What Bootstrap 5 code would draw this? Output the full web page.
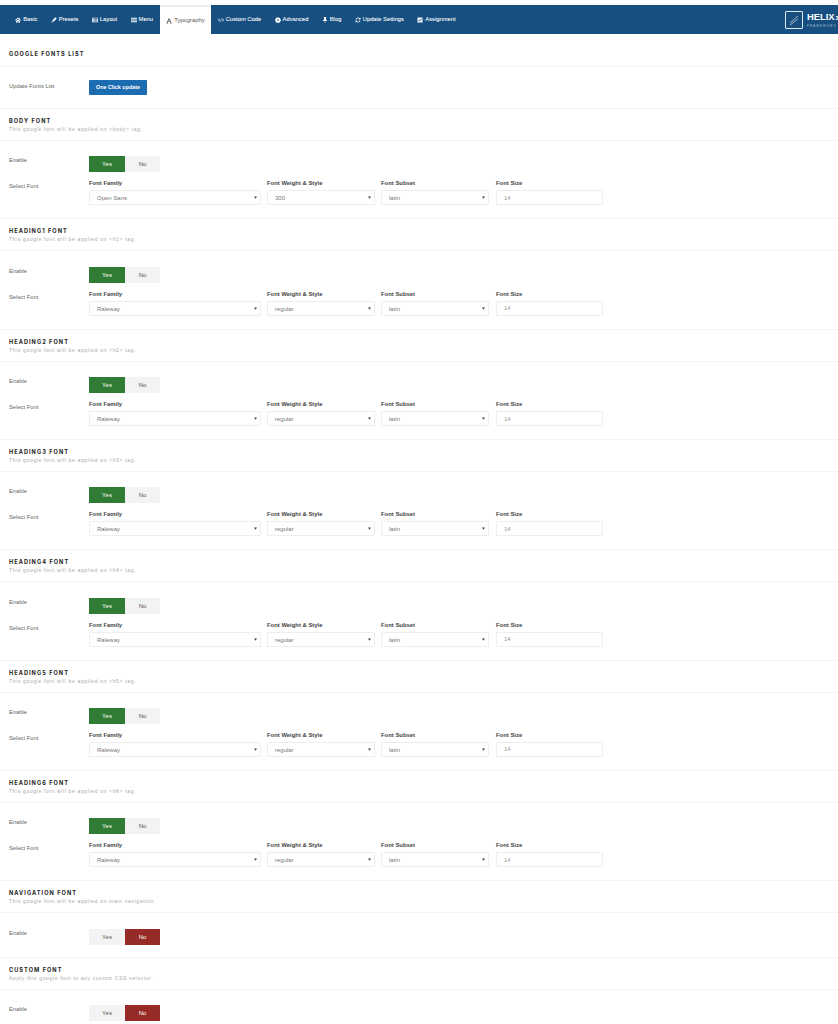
<!DOCTYPE html>
<html lang="en">
<head>
  <meta charset="UTF-8" />
  <meta name="viewport" content="width=device-width, initial-scale=1.0"/>
  <title>Typography - Helix Framework</title>
  <link href="https://cdn.jsdelivr.net/npm/bootstrap@5.3.0/dist/css/bootstrap.min.css" rel="stylesheet" />
  <style>
    body {
      background-color: #fff;
      font-family: "Liberation Sans", Arial, sans-serif;
      font-size: 6px;
      color: #555;
      overflow-x: hidden;
    }
    .top-bar {
      margin-top: 5px;
      height: 29px;
      background-color: #164f80;
      overflow: hidden;
    }
    .top-bar .nav { padding-left: 8.5px; }
    .top-bar .nav-link {
      height: 29px;
      padding: 0 6.7px;
      color: #fff;
      font-size: 5.8px;
      line-height: 29px;
      display: flex;
      align-items: center;
      gap: 2px;
      white-space: nowrap;
      -webkit-text-stroke: .06px #fff;
    }
    .top-bar .nav-link svg { width: 6px; height: 6px; fill: #fff; flex: none; }
    .top-bar .nav-link.active {
      background-color: #fff;
      color: #555;
      border-top: 2px solid #eee;
      padding: 0 6.5px;
      -webkit-text-stroke: 0;
    }
    .top-bar .nav-link.active svg { fill: #555; }
    .helix-logo { width: 53px; height: 29px; overflow: hidden; flex: none; color: #fff; gap: 4px; }
    .logo-box { width: 18px; height: 18px; border: 1px solid #dfe8f0; border-radius: 1px; flex: none; }
    .logo-name { font-size: 9.4px; font-weight: 700; line-height: 9px; white-space: nowrap; }
    .logo-name span { font-size: 5px; margin-left: 1px; }
    .logo-sub { color: #a9c0d4; font-size: 3px; letter-spacing: 1.1px; line-height: 4px; margin-top: 1px; white-space: nowrap; }
    .sec-head {
      height: 32px;
      padding: 9px 0 0 9px;
      border-bottom: 1px solid #f3f3f3;
    }
    .sec-head.first { height: 33px; padding-top: 17px; }
    .sec-title {
      color: #222;
      font-family: Inter, sans-serif;
      font-size: 5.6px;
      font-weight: 700;
      letter-spacing: 1.05px;
      line-height: 7px;
      text-transform: uppercase;
      margin: 0;
    }
    .sec-sub { color: #aaa; font-size: 5px; letter-spacing: .65px; line-height: 8px; margin: 0; }
    .sec-body {
      padding: 15.4px 0 12.93px;
      border-bottom: 1px solid #f3f3f3;
    }
    .sec-body.short { padding-bottom: 12px; }
    .sec-body.update { padding: 13px 0; }
    .sec-body.last { border-bottom: 0; padding-bottom: 2px; }
    .opt-label { width: 89px; flex: none; padding: 1px 0 0 9px; color: #666; font-size: 5.8px; line-height: 7px; }
    .opt-label.label-drop { padding-top: 3px; }
    .switch-group { width: 71px; height: 16px; }
    .switch-group .btn {
      width: 35px;
      flex: none;
      padding: 0;
      border: 0;
      border-radius: 0;
      background-color: #f3f3f3;
      color: #555;
      font-size: 6px;
      line-height: 16px;
    }
    .switch-group .btn:first-child { width: 36px; }
    .switch-group .btn.yes-on { background-color: #317c34; color: #fff; }
    .switch-group .btn.no-on { background-color: #962a26; color: #fff; }
    .update-btn {
      width: 58px;
      height: 15px;
      padding: 0;
      border: 0;
      border-radius: 1px;
      background-color: #1b6cb0;
      color: #fff;
      font-size: 5.4px;
      font-weight: 700;
      line-height: 15px;
    }
    .font-row { margin-top: 8px; }
    .font-col { flex: none; margin-right: 6px; }
    .font-col.fam { width: 172px; }
    .font-col.wgt, .font-col.sub { width: 108px; }
    .font-col.sub { margin-right: 7px; }
    .font-col.siz { width: 107px; }
    .field-name { color: #444; font-size: 5.9px; font-weight: 700; line-height: 7px; margin-bottom: 3px; }
    .font-col .form-select, .font-col .form-control {
      height: 15px;
      padding: 0 7px;
      border: 1px solid #eee;
      border-radius: 1px;
      color: #777;
      font-size: 6px;
      line-height: 13px;
      min-height: 0;
    }
    .font-col .form-select {
      padding-top: 1px;
      background-image: url("data:image/svg+xml,%3Csvg xmlns='http://www.w3.org/2000/svg' viewBox='0 0 4 3'%3E%3Cpath fill='%23444' d='M0 0h4L2 3z'/%3E%3C/svg%3E");
      background-position: right 3px center;
      background-size: 3px 3px;
    }
    .font-col .form-control { color: #999; }
  </style>
</head>
<body>
  <nav class="top-bar d-flex justify-content-between">
    <ul class="nav flex-nowrap">
      <li class="nav-item"><a class="nav-link" href="#"><svg viewBox="0 0 12 12"><path d="M6 1 0 6.500l1 1L6 3l5 4.500 1-1L9.500 4.200V1.500h-1.500v1.300zM2.200 8v3.500h2.800V8.500h2v3h2.800V8L6 4.500z"/></svg>Basic</a></li>
      <li class="nav-item"><a class="nav-link" href="#"><svg viewBox="0 0 12 12"><path d="M9 .5 11.500 3 5 9.500 2.500 7zM2 8l2 2-3.500 1.500z"/></svg>Presets</a></li>
      <li class="nav-item"><a class="nav-link" href="#"><svg viewBox="0 0 12 12"><path d="M0 1.500h12v9H0zm1 1v1.500h2V2.500zm3 0v1.500h7V2.500zM1 5v1.500h2V5zm3 0v1.500h7V5zM1 7.500V9h2V7.500zm3 0V9h7V7.500z"/></svg>Layout</a></li>
      <li class="nav-item"><a class="nav-link" href="#"><svg viewBox="0 0 12 12"><path d="M0 1.500h12v2H0zm0 3.500h12v2H0zm0 3.500h12v2H0z"/></svg>Menu</a></li>
      <li class="nav-item"><a class="nav-link active" href="#"><svg viewBox="0 0 12 12"><path d="M5 1h2l4 9.500h1V11H8v-.5h1L8 8H4l-1 2.500h1V11H0v-.5h1zM6 3 4.400 7h3.200z"/></svg>Typography</a></li>
      <li class="nav-item"><a class="nav-link" href="#"><svg viewBox="0 0 12 8"><path d="M3 1 0 4l3 3 .8-.8L1.600 4l2.200-2.200zM9 1l3 3-3 3-.8-.8L10.400 4 8.200 1.800zM6.800 .5h1L5.200 7.500h-1z"/></svg>Custom Code</a></li>
      <li class="nav-item"><a class="nav-link" href="#"><svg viewBox="0 0 12 12"><path fill-rule="evenodd" d="M5 .5h2l.3 1.400 1 .4 1.200-.8 1.400 1.400-.8 1.200.4 1 1.500.4v2l-1.500.3-.4 1 .8 1.300-1.400 1.400-1.200-.8-1 .4-.3 1.400H5l-.3-1.400-1-.4-1.200.8-1.400-1.400.8-1.300-.4-1L0 7V5l1.500-.4.4-1-.8-1.200 1.400-1.400 1.200.8 1-.4zM6 4.300a1.700 1.700 0 1 0 0 3.400 1.700 1.700 0 0 0 0-3.400z"/></svg>Advanced</a></li>
      <li class="nav-item"><a class="nav-link" href="#"><svg viewBox="0 0 12 12"><path d="M3.500 0h5v1H8v4l2 2v1H6.500v4h-1V8H2V7l2-2V1h-.5z"/></svg>Blog</a></li>
      <li class="nav-item"><a class="nav-link" href="#"><svg viewBox="0 0 12 12"><path d="M6 1a5 5 0 0 1 3.500 1.500L11 1v4H7l1.500-1.500A3 3 0 0 0 3.200 5H1.200A5 5 0 0 1 6 1zM1 7h4L3.500 8.500A3 3 0 0 0 8.800 7h2A5 5 0 0 1 2.500 9.500L1 11z"/></svg>Update Settings</a></li>
      <li class="nav-item"><a class="nav-link" href="#"><svg viewBox="0 0 12 12"><path fill-rule="evenodd" d="M1 1h10v10H1zm1.500 5.500L5 9l5-5-1-1-4 4-1.500-1.500z"/></svg>Assignment</a></li>
    </ul>
    <div class="helix-logo d-flex align-items-center">
      <div class="logo-box d-flex align-items-center justify-content-center">
        <svg width="12" height="12" viewBox="0 0 12 12"><path d="M2 9 10 2M2 11 10 5" stroke="#dfe8f0" stroke-width=".7" fill="none"/></svg>
      </div>
      <div>
        <div class="logo-name">HELIX<span>3</span></div>
        <div class="logo-sub">FRAMEWORK</div>
      </div>
    </div>
  </nav>

  <div class="sec-head first">
    <h3 class="sec-title">Google Fonts List</h3>
  </div>
  <div class="sec-body update d-flex">
    <div class="opt-label label-drop">Update Fonts List</div>
    <button type="button" class="btn update-btn">One Click update</button>
  </div>

  <div id="font-sections"></div>

  <script>
    // the seven font blocks only differ by name, tag and selected font
    const blocks = [
      ["Body Font", "&lt;body&gt;", "Open Sans", "300"],
      ["Heading1 Font", "&lt;h1&gt;", "Raleway", "regular"],
      ["Heading2 Font", "&lt;h2&gt;", "Raleway", "regular"],
      ["Heading3 Font", "&lt;h3&gt;", "Raleway", "regular"],
      ["Heading4 Font", "&lt;h4&gt;", "Raleway", "regular"],
      ["Heading5 Font", "&lt;h5&gt;", "Raleway", "regular"],
      ["Heading6 Font", "&lt;h6&gt;", "Raleway", "regular"]
    ];

    const head = (title, sub) => `
      <div class="sec-head">
        <h3 class="sec-title">${title}</h3>
        <p class="sec-sub">${sub}</p>
      </div>`;

    const toggle = (on) => `
      <div class="d-flex">
        <div class="opt-label">Enable</div>
        <div class="btn-group switch-group">
          <button type="button" class="btn ${on ? "yes-on" : ""}">Yes</button>
          <button type="button" class="btn ms-0 ${on ? "" : "no-on"}">No</button>
        </div>
      </div>`;

    let html = "";
    blocks.forEach(([title, tag, family, weight]) => {
      html += head(title, `This google font will be applied on ${tag} tag.`) + `
      <div class="sec-body">
        ${toggle(true)}
        <div class="d-flex font-row">
          <div class="opt-label label-drop">Select Font</div>
          <div class="font-col fam">
            <div class="field-name">Font Family</div>
            <select class="form-select"><option>${family}</option></select>
          </div>
          <div class="font-col wgt">
            <div class="field-name">Font Weight &amp; Style</div>
            <select class="form-select"><option>${weight}</option></select>
          </div>
          <div class="font-col sub">
            <div class="field-name">Font Subset</div>
            <select class="form-select"><option>latin</option></select>
          </div>
          <div class="font-col siz">
            <div class="field-name">Font Size</div>
            <input type="text" class="form-control" value="14" />
          </div>
        </div>
      </div>`;
    });

    html += head("Navigation Font", "This google font will be applied on main navigation.");
    html += `<div class="sec-body short">${toggle(false)}</div>`;
    html += head("Custom Font", "Apply this google font to any custom CSS selector.");
    html += `<div class="sec-body last">${toggle(false)}</div>`;

    document.getElementById("font-sections").innerHTML = html;
  </script>
  <script src="https://cdn.jsdelivr.net/npm/bootstrap@5.3.0/dist/js/bootstrap.bundle.min.js"></script>
</body>
</html>
